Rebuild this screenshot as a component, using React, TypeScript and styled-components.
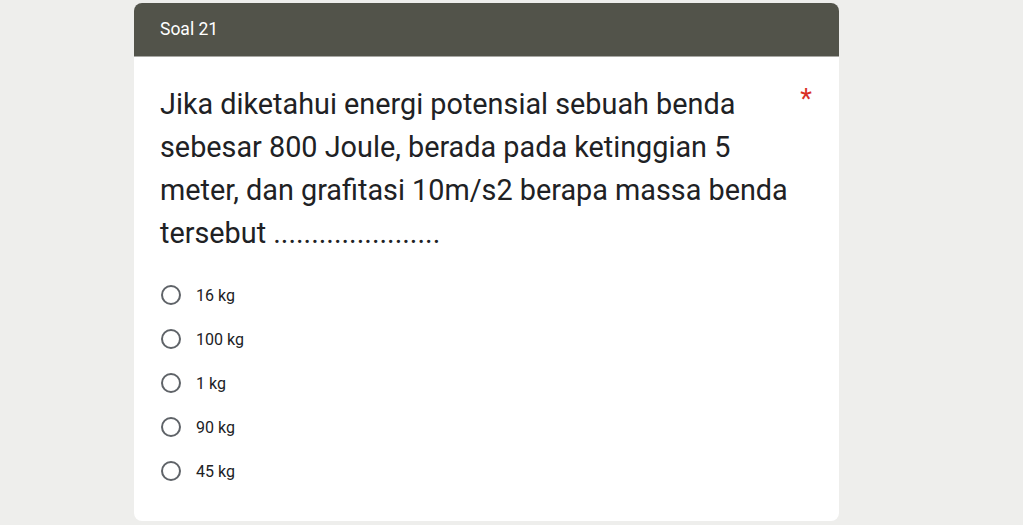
import React, { FC } from 'react';
import styled, { createGlobalStyle } from 'styled-components';

const GlobalStyle = createGlobalStyle`
  html, body {
    margin: 0;
    padding: 0;
    background: #eeeeec;
    font-family: Roboto, "Noto Sans", Arial, sans-serif;
  }
`;

const Page = styled.div`
  padding: 3px 0 0 134px;
`;

const Card = styled.section`
  width: 705px;
  background: #fff;
  border-radius: 8px;
  overflow: hidden;
`;

const Header = styled.header`
  height: 54px;
  background: #52534a;
  border-bottom: 1px solid #a8a8a4;
  color: #fff;
  font-size: 17.5px;
  display: flex;
  align-items: center;
  padding: 0 26px 2px;
  box-sizing: border-box;
`;

const Body = styled.div`
  padding: 26px 26px 28px 26px;
`;

const TitleRow = styled.div`
  display: flex;
  align-items: flex-start;
  justify-content: space-between;
`;

const Title = styled.h2`
  margin: 0;
  width: 636px;
  font-size: 28.8px;
  font-weight: 400;
  line-height: 43px;
  color: #202124;
`;

const Required = styled.span`
  color: #d93025;
  font-size: 27px;
  line-height: 27px;
  margin-right: 1px;
  margin-top: 3px;
`;

const Options = styled.div`
  margin-top: 18px;
  display: flex;
  flex-direction: column;
`;

const Option = styled.label`
  display: flex;
  align-items: center;
  height: 44px;
  gap: 15px;
  padding-left: 1px;
  font-size: 16px;
  color: #202124;
  cursor: pointer;
`;

const Radio = styled.span`
  width: 20px;
  height: 20px;
  box-sizing: border-box;
  border: 2px solid #5f6368;
  border-radius: 50%;
  flex-shrink: 0;
`;

const answers = ['16 kg', '100 kg', '1 kg', '90 kg', '45 kg'];

const App: FC = () => (
  <>
    <GlobalStyle />
    <Page>
      <Card>
        <Header>Soal 21</Header>
        <Body>
          <TitleRow>
            <Title>
              Jika diketahui energi potensial sebuah benda sebesar 800 Joule,
              berada pada ketinggian 5 meter, dan grafitasi 10m/s2 berapa massa
              benda tersebut ......................
            </Title>
            <Required>*</Required>
          </TitleRow>
          <Options>
            {answers.map((a) => (
              <Option key={a}>
                <Radio />
                {a}
              </Option>
            ))}
          </Options>
        </Body>
      </Card>
    </Page>
  </>
);

export default App;
